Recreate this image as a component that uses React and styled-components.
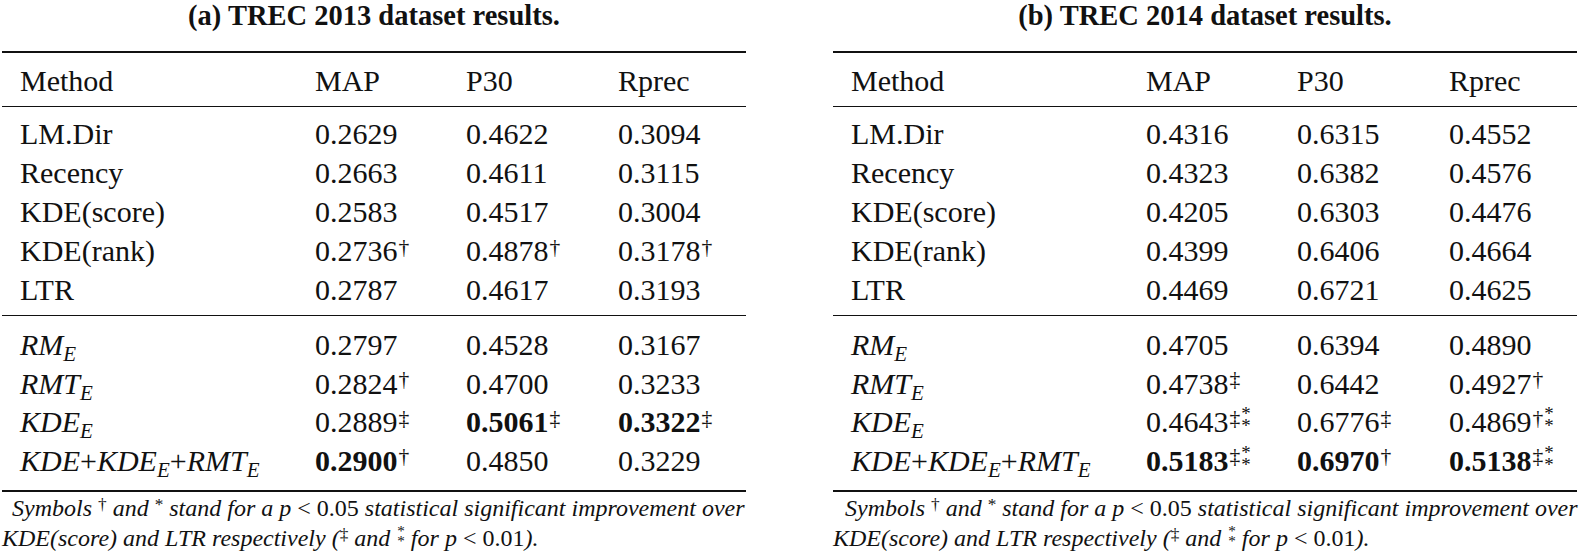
import React from 'react';
import styled, { createGlobalStyle } from 'styled-components';

const GlobalStyle = createGlobalStyle`
  body {
    margin: 0;
    background: #fff;
    color: #111;
    font-family: "Liberation Serif", "Times New Roman", serif;
  }
`;

const Page = styled.div`
  display: flex;
  gap: 87px;
  padding-left: 2px;
  width: 1579px;
  overflow: hidden;
`;

const Panel = styled.div`
  flex: none;
  width: 744px;
`;

const Title = styled.div`
  height: 50px;
  padding-top: 1px;
  font-size: 28.5px;
  line-height: 30px;
  font-weight: bold;
  text-align: center;
`;

const Table = styled.div`
  border-top: 2px solid #111;
  border-bottom: 2px solid #111;
`;

const Group = styled.div`
  padding: ${(p) => p.$pad};
  & + & {
    border-top: 1px solid #111;
  }
`;

const Row = styled.div`
  display: grid;
  grid-template-columns: 295px 151px 152px 1fr;
  padding-left: 18px;
  height: ${(p) => p.$h}px;
  font-size: 30px;
  line-height: ${(p) => p.$h}px;
  white-space: nowrap;
`;

const Cell = styled.div`
  font-weight: ${(p) => (p.$bold ? 'bold' : 'normal')};
`;

const MathIt = styled.span`
  font-style: italic;
`;

const Plain = styled.span`
  font-style: normal;
`;

const Sub = styled.span`
  font-style: italic;
  font-size: 0.7em;
  vertical-align: -0.28em;
  line-height: 0;
`;

const Sup = styled.span`
  font-weight: normal;
  font-style: normal;
  font-size: 0.72em;
  vertical-align: 0.33em;
  line-height: 0;
  margin-left: ${(p) => p.$gap}px;
`;

const Stars = styled.span`
  display: inline-block;
  font-weight: normal;
  font-style: normal;
  font-size: 0.63em;
  line-height: 0.63em;
  text-align: center;
  vertical-align: baseline;
  margin-left: 1px;
`;

const Note = styled.div`
  margin-top: 1px;
  font-style: italic;
  font-size: 24px;
  line-height: 30px;
  white-space: nowrap;
`;

const NoteLine = styled.div`
  padding-left: ${(p) => p.$indent}px;
`;

const Marks = ({ m, gap = 1 }) => {
  if (!m) return null;
  const stacked = m.endsWith('s');
  const lead = stacked ? m.slice(0, -1) : m;
  return (
    <>
      {lead && <Sup $gap={gap}>{lead}</Sup>}
      {stacked && (
        <Stars>
          *<br />*
        </Stars>
      )}
    </>
  );
};

const MethodName = ({ name }) => {
  if (name === 'RM' || name === 'RMT' || name === 'KDE') {
    return (
      <MathIt>
        {name}
        <Sub>E</Sub>
      </MathIt>
    );
  }
  if (name === 'ALL') {
    return (
      <MathIt>
        KDE<Plain>+</Plain>KDE<Sub>E</Sub>
        <Plain>+</Plain>RMT<Sub>E</Sub>
      </MathIt>
    );
  }
  return name;
};

const v = (value, m, bold) => ({ value, m, bold });

const tables = [
  {
    title: '(a) TREC 2013 dataset results.',
    indent: 10,
    base: [
      ['LM.Dir', v('0.2629'), v('0.4622'), v('0.3094')],
      ['Recency', v('0.2663'), v('0.4611'), v('0.3115')],
      ['KDE(score)', v('0.2583'), v('0.4517'), v('0.3004')],
      ['KDE(rank)', v('0.2736', '†'), v('0.4878', '†'), v('0.3178', '†')],
      ['LTR', v('0.2787'), v('0.4617'), v('0.3193')],
    ],
    ours: [
      ['RM', v('0.2797'), v('0.4528'), v('0.3167')],
      ['RMT', v('0.2824', '†'), v('0.4700'), v('0.3233')],
      ['KDE', v('0.2889', '‡'), v('0.5061', '‡', true), v('0.3322', '‡', true)],
      ['ALL', v('0.2900', '†', true), v('0.4850'), v('0.3229')],
    ],
  },
  {
    title: '(b) TREC 2014 dataset results.',
    indent: 12,
    base: [
      ['LM.Dir', v('0.4316'), v('0.6315'), v('0.4552')],
      ['Recency', v('0.4323'), v('0.6382'), v('0.4576')],
      ['KDE(score)', v('0.4205'), v('0.6303'), v('0.4476')],
      ['KDE(rank)', v('0.4399'), v('0.6406'), v('0.4664')],
      ['LTR', v('0.4469'), v('0.6721'), v('0.4625')],
    ],
    ours: [
      ['RM', v('0.4705'), v('0.6394'), v('0.4890')],
      ['RMT', v('0.4738', '‡'), v('0.6442'), v('0.4927', '†')],
      ['KDE', v('0.4643', '‡s'), v('0.6776', '‡'), v('0.4869', '†s')],
      ['ALL', v('0.5183', '‡s', true), v('0.6970', '†', true), v('0.5138', '‡s', true)],
    ],
  },
];

const DataRow = ({ row, h }) => (
  <Row $h={h}>
    <Cell>
      <MethodName name={row[0]} />
    </Cell>
    {row.slice(1).map((c, i) => (
      <Cell key={i} $bold={c.bold}>
        {c.value}
        <Marks m={c.m} />
      </Cell>
    ))}
  </Row>
);

function ResultTable({ t }) {
  return (
    <Panel>
      <Title>{t.title}</Title>
      <Table>
        <Group $pad="8px 0 6px">
          <Row $h={39}>
            <Cell>Method</Cell>
            <Cell>MAP</Cell>
            <Cell>P30</Cell>
            <Cell>Rprec</Cell>
          </Row>
        </Group>
        <Group $pad="7px 0 6px">
          {t.base.map((r, i) => (
            <DataRow key={i} row={r} h={39} />
          ))}
        </Group>
        <Group $pad="10px 0 10px">
          {t.ours.map((r, i) => (
            <DataRow key={i} row={r} h={38.5} />
          ))}
        </Group>
      </Table>
      <Note>
        <NoteLine $indent={t.indent}>
          Symbols <Marks m="†" gap={0} /> and <Marks m="*" gap={0} /> stand for a <MathIt>p</MathIt>
          <Plain> &lt; 0.05 </Plain>statistical significant improvement over
        </NoteLine>
        <NoteLine $indent={0}>
          KDE(score) and LTR respectively (<Marks m="‡" gap={0} /> and <Marks m="s" /> for{' '}
          <MathIt>p</MathIt>
          <Plain> &lt; 0.01</Plain>).
        </NoteLine>
      </Note>
    </Panel>
  );
}

export default function App() {
  return (
    <>
      <GlobalStyle />
      <Page>
        {tables.map((t, i) => (
          <ResultTable key={i} t={t} />
        ))}
      </Page>
    </>
  );
}
